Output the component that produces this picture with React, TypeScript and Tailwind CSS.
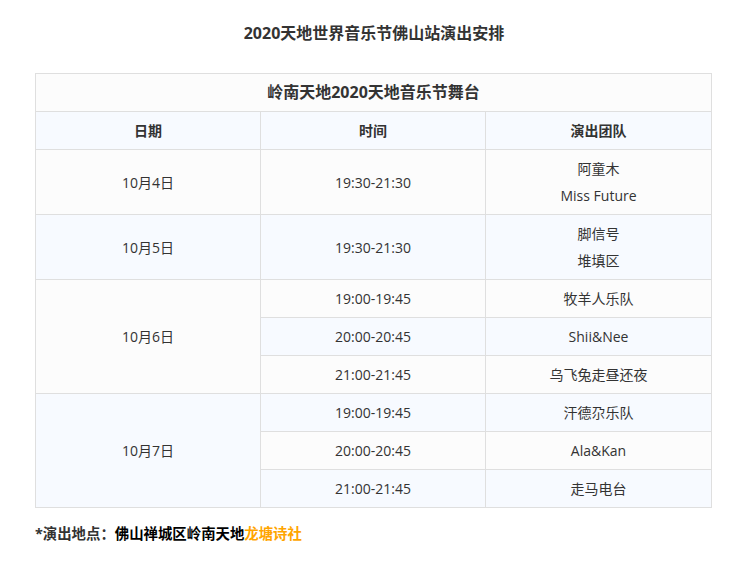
const font = { fontFamily: '"Open Sans", "Noto Sans CJK SC", sans-serif' };

type Slot = { time: string; bands: string[] };
type Day = { date: string; slots: Slot[] };

const days: Day[] = [
    { date: '10月4日', slots: [{ time: '19:30-21:30', bands: ['阿童木', 'Miss Future'] }] },
    { date: '10月5日', slots: [{ time: '19:30-21:30', bands: ['脚信号', '堆填区'] }] },
    {
        date: '10月6日',
        slots: [
            { time: '19:00-19:45', bands: ['牧羊人乐队'] },
            { time: '20:00-20:45', bands: ['Shii&Nee'] },
            { time: '21:00-21:45', bands: ['乌飞兔走昼还夜'] },
        ],
    },
    {
        date: '10月7日',
        slots: [
            { time: '19:00-19:45', bands: ['汗德尕乐队'] },
            { time: '20:00-20:45', bands: ['Ala&Kan'] },
            { time: '21:00-21:45', bands: ['走马电台'] },
        ],
    },
];

const cell = 'border border-[#dfdfdf] px-[10px] py-[5px] text-center align-middle leading-[27px]';

export default function App() {
    // stripe by row index: title 0, header 1, then data rows
    let rowIdx = 2;
    const rows: JSX.Element[] = [];
    days.forEach((d) => {
        d.slots.forEach((s, i) => {
            const bg = rowIdx % 2 === 0 ? 'bg-[#fcfcfc]' : 'bg-[#f7faff]';
            rows.push(
                <tr key={d.date + s.time} className={bg}>
                    {i === 0 && (
                        <td rowSpan={d.slots.length} className={cell}>
                            {d.date}
                        </td>
                    )}
                    <td className={cell}>{s.time}</td>
                    <td className={cell}>
                        {s.bands.map((b) => (
                            <div key={b}>{b}</div>
                        ))}
                    </td>
                </tr>
            );
            rowIdx++;
        });
    });

    return (
        <div className="w-[750px] h-[563px] bg-white text-[#333] pt-[21px] pl-[35px]" style={font}>
            <h1 className="text-center text-[16px] leading-[24px] font-bold w-[678px]">2020天地世界音乐节佛山站演出安排</h1>
            <table className="mt-[28px] w-[676px] border-collapse table-fixed text-[14px]">
                <colgroup>
                    <col className="w-[225px]" />
                    <col className="w-[225px]" />
                    <col className="w-[226px]" />
                </colgroup>
                <tbody>
                    <tr className="bg-[#fcfcfc]">
                        <td colSpan={3} className={`${cell} font-bold text-[16px]`}>
                            岭南天地2020天地音乐节舞台
                        </td>
                    </tr>
                    <tr className="bg-[#f7faff]">
                        <td className={`${cell} font-bold`}>日期</td>
                        <td className={`${cell} font-bold`}>时间</td>
                        <td className={`${cell} font-bold`}>演出团队</td>
                    </tr>
                    {rows}
                </tbody>
            </table>
            <p className="mt-[14px] text-[14.4px] leading-[24px] font-bold">
                *演出地点：<span className="text-black">佛山禅城区岭南天地</span>
                <span className="text-[#ffa500]">龙塘诗社</span>
            </p>
        </div>
    );
}
